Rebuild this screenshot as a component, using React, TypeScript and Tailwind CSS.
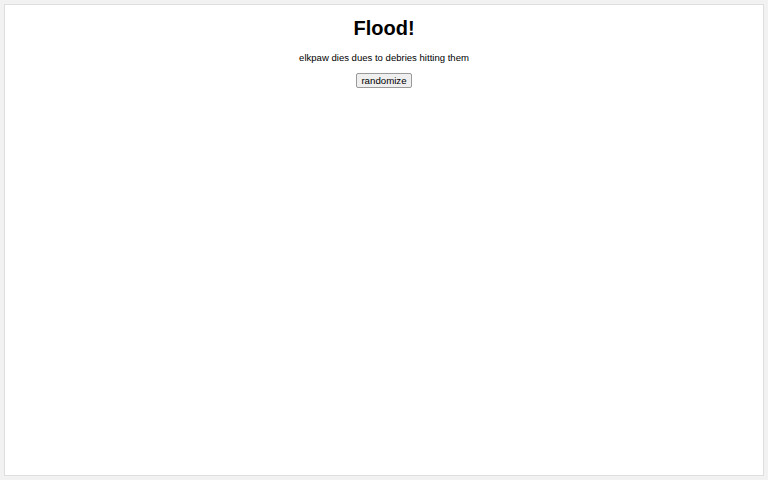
import React from "react";

export default function App() {
  return (
    <div className="h-screen w-full bg-[#f2f2f2] p-1 box-border" style={{ fontFamily: '"Liberation Sans", Arial, sans-serif' }}>
      <div className="h-full w-full bg-white border border-[#dedede] flex flex-col items-center box-border">
        <h1 className="text-[20px] font-bold text-black mt-[12px] leading-[23px]">Flood!</h1>
        <p className="text-[9.55px] text-black mt-[12px] leading-[12px]">elkpaw dies dues to debries hitting them</p>
        <button className="mt-[9px] text-[9.7px] leading-[12px] text-black bg-[#efefef] border border-[#999999] rounded-[2px] px-[4px] py-[0px] h-[15px]">randomize</button>
      </div>
    </div>
  );
}
